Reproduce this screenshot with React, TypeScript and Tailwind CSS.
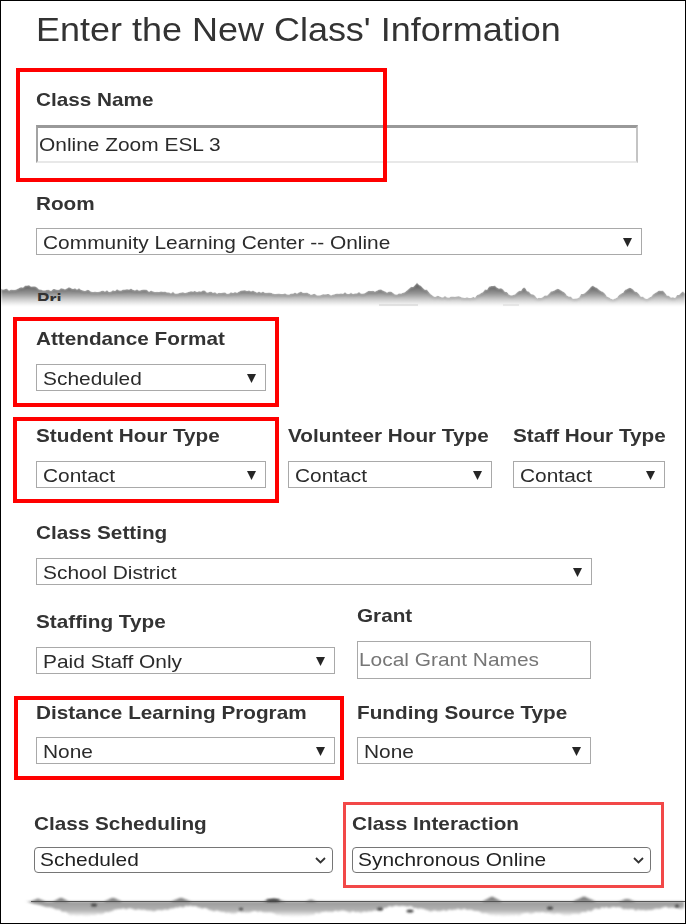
import React from 'react';

const W = 684;

function rng(seed: number) {
  let s = seed;
  return () => {
    s = (s * 16807) % 2147483647;
    return s / 2147483647;
  };
}

// page x, height above base, half width
const topPeaks: [number, number, number][] = [
  [28, 5, 14], [70, 3, 20], [130, 3, 25], [200, 2, 20], [250, 3, 25], [300, 2, 15],
  [345, 2, 20], [378, 6, 28], [416, 13, 18], [493, 13, 20], [523, 10, 14], [556, 10, 16],
  [593, 14, 18], [629, 13, 16], [659, 11, 14], [682, 9, 12],
];

function topRidge() {
  const r = rng(11);
  const pts: [number, number][] = [];
  for (let x = 0; x <= W; x += 2) {
    let y = 14 + (11 * x) / W;
    for (const [px, h, w] of topPeaks) {
      const d = Math.abs(x - px);
      if (d < w) y -= h * (1 - d / w);
    }
    y += (r() - 0.5) * 2.2;
    pts.push([x, y]);
  }
  return pts;
}

const RIDGE = topRidge();
const TOP_FILL = `M0 36 L${RIDGE.map(([x, y]) => `${x} ${y.toFixed(1)}`).join(' L')} L${W} 36 Z`;
const TOP_PAPER = `M0 0 L${RIDGE.map(([x, y]) => `${x} ${(y - 0.5).toFixed(1)}`).join(' L')} L${W} 0 Z`;

const bottomBumps: [number, number, number][] = [
  [37, 3, 8], [60, 4, 8], [112, 4, 9], [180, 4, 10], [273, 3, 12], [310, 2, 6],
  [491, 5, 10], [583, 5, 12], [626, 3, 8],
];

function bottomTearPath() {
  const r = rng(5);
  const top: string[] = [];
  const bottom: string[] = [];
  for (let x = 25; x <= W; x += 2) {
    let y = 11.5;
    for (const [px, h, w] of bottomBumps) {
      const d = Math.abs(x - px);
      if (d < w) y -= h * (1 - d / w);
    }
    top.push(`${x} ${y.toFixed(1)}`);
    const fade = Math.min(1, (x - 25) / 45);
    const depth = 10 + 3.5 * Math.sin(x / 37) + 2 * Math.sin(x / 11) + (r() - 0.5) * 2;
    bottom.unshift(`${x} ${(11.5 + depth * fade).toFixed(1)}`);
  }
  return `M${top.join(' L')} L${bottom.join(' L')} Z`;
}

const BOTTOM_PATH = bottomTearPath();

function TopTear() {
  return (
    <svg width={W} height="36" viewBox={`0 0 ${W} 36`} className="-ml-[35px] mt-[21px] block">
      <defs>
        <linearGradient id="tg" x1="0" y1="8" x2="0" y2="30" gradientUnits="userSpaceOnUse">
          <stop offset="0" stopColor="#5e5e5e" />
          <stop offset="0.4" stopColor="#8f8f8f" />
          <stop offset="0.75" stopColor="#d6d6d6" />
          <stop offset="1" stopColor="#ffffff" />
        </linearGradient>
        <filter id="tb" x="-5%" y="-50%" width="110%" height="200%">
          <feGaussianBlur stdDeviation="0.8" />
        </filter>
        <filter id="ts" x="-5%" y="-50%" width="110%" height="250%">
          <feDropShadow dx="0" dy="1.5" stdDeviation="1.5" floodColor="#000" floodOpacity="0.25" />
        </filter>
        <clipPath id="tc">
          <rect x="0" y="17" width="120" height="8" />
        </clipPath>
      </defs>
      <path d={TOP_FILL} fill="url(#tg)" filter="url(#tb)" />
      <line x1="378" y1="29" x2="417" y2="29" stroke="#dadada" strokeWidth="1.5" />
      <line x1="502" y1="29" x2="518" y2="29" stroke="#e0e0e0" strokeWidth="1.5" />
      <g clipPath="url(#tc)">
        <text x="36" y="30" fontFamily="'Liberation Sans', Arial, sans-serif" fontWeight="bold" fontSize="18.5" fill="#333">
          Pri
        </text>
      </g>
      <path d={TOP_PAPER} fill="#ffffff" filter="url(#ts)" />
    </svg>
  );
}

function BottomTear() {
  return (
    <svg width={W} height="32" viewBox={`0 0 ${W} 32`} className="-ml-[35px] mt-[17px] block">
      <defs>
        <linearGradient id="bg" x1="0" y1="8" x2="0" y2="27" gradientUnits="userSpaceOnUse">
          <stop offset="0" stopColor="#7a7a7a" />
          <stop offset="0.3" stopColor="#a0a0a0" />
          <stop offset="0.65" stopColor="#b4b4b4" />
          <stop offset="1" stopColor="#ffffff" />
        </linearGradient>
        <filter id="bb" x="-5%" y="-50%" width="110%" height="200%">
          <feGaussianBlur stdDeviation="0.9" />
        </filter>
      </defs>
      <path d={BOTTOM_PATH} fill="url(#bg)" filter="url(#bb)" />
      <line x1="30" y1="11.5" x2={W} y2="11.5" stroke="#555" strokeWidth="1" />
      <g fill="#3f3f3f" filter="url(#bb)">
        <ellipse cx="93" cy="15" rx="3" ry="1.5" />
        <ellipse cx="240" cy="19" rx="2" ry="1.2" />
        <ellipse cx="272" cy="10.5" rx="7" ry="1.6" />
        <ellipse cx="379" cy="19" rx="3" ry="1.6" />
        <ellipse cx="409" cy="21" rx="3.5" ry="1.6" />
        <ellipse cx="549" cy="18" rx="3" ry="1.6" />
        <ellipse cx="676" cy="16" rx="2" ry="1.5" />
      </g>
    </svg>
  );
}

function Label({ children, className = '' }: { children: React.ReactNode; className?: string }) {
  return (
    <div className={`h-[22px] whitespace-nowrap text-[18.5px] font-bold leading-[22px] text-[#333] ${className}`}>
      <span className="inline-block origin-left scale-x-[1.12]">{children}</span>
    </div>
  );
}

function Value({ children, className = '' }: { children: React.ReactNode; className?: string }) {
  return (
    <span className={`inline-block origin-left scale-x-[1.1] whitespace-nowrap text-[19px] leading-[22px] ${className}`}>
      {children}
    </span>
  );
}

function Arrow() {
  return (
    <svg width="9" height="9" viewBox="0 0 9 9" className="shrink-0">
      <path d="M0 0H9L4.5 9Z" fill="#262626" />
    </svg>
  );
}

function OldSelect({ value, className = '' }: { value: string; className?: string }) {
  return (
    <div
      className={`flex h-[27px] items-center justify-between border border-[#a9a9a9] bg-white pl-[6px] pr-[9px] pt-[2px] text-[#2b2b2b] ${className}`}
    >
      <Value>{value}</Value>
      <Arrow />
    </div>
  );
}

function NewSelect({ value, className = '' }: { value: string; className?: string }) {
  return (
    <div
      className={`flex h-[26px] items-center justify-between rounded-[4px] border border-[#767676] bg-white pl-[5px] pr-[6px] text-[#222] ${className}`}
    >
      <Value>{value}</Value>
      <svg width="11" height="7" viewBox="0 0 11 7" className="shrink-0">
        <path d="M1 1L5.5 5.5L10 1" fill="none" stroke="#333" strokeWidth="1.8" />
      </svg>
    </div>
  );
}

export default function App() {
  return (
    <div className="relative h-[924px] w-[686px] overflow-hidden border border-black bg-white font-['Liberation_Sans',Arial,sans-serif]">
      <div className="flex flex-col pl-[35px]">
        <h1 className="mt-[9px] h-[40px] whitespace-nowrap text-[33px] font-normal leading-[40px] text-[#333]">
          <span className="inline-block origin-left scale-x-[1.09]">Enter the New Class' Information</span>
        </h1>

        <Label className="mt-[39px]">Class Name</Label>
        <div className="mt-[14px] flex h-[38px] w-[602px] items-center border-b-2 border-l-2 border-r-2 border-t-[3px] border-b-[#e8e8e8] border-l-[#a3a3a3] border-r-[#c4c4c4] border-t-[#999] pl-[1px] text-[#2b2b2b]">
          <Value>Online Zoom ESL 3</Value>
        </div>

        <Label className="mt-[30px]">Room</Label>
        <OldSelect value="Community Learning Center -- Online" className="mt-[13px] w-[606px]" />

        <TopTear />

        <Label className="mt-[16px]">Attendance Format</Label>
        <OldSelect value="Scheduled" className="mt-[14px] w-[230px]" />

        <div className="mt-[34px] flex">
          <div className="w-[230px]">
            <Label>Student Hour Type</Label>
            <OldSelect value="Contact" className="mt-[14px]" />
          </div>
          <div className="ml-[22px] w-[204px]">
            <Label>Volunteer Hour Type</Label>
            <OldSelect value="Contact" className="mt-[14px]" />
          </div>
          <div className="ml-[21px] w-[152px]">
            <Label>Staff Hour Type</Label>
            <OldSelect value="Contact" className="mt-[14px]" />
          </div>
        </div>

        <Label className="mt-[34px]">Class Setting</Label>
        <OldSelect value="School District" className="mt-[14px] w-[556px]" />

        <div className="mt-[20px] flex items-start">
          <div className="mt-[6px] w-[299px]">
            <Label>Staffing Type</Label>
            <OldSelect value="Paid Staff Only" className="mt-[14px]" />
          </div>
          <div className="ml-[22px] w-[234px]">
            <Label>Grant</Label>
            <div className="mt-[14px] flex h-[38px] items-center border border-[#a9a9a9] pl-[1px] text-[#767676]">
              <Value>Local Grant Names</Value>
            </div>
          </div>
        </div>

        <div className="mt-[23px] flex">
          <div className="w-[299px]">
            <Label>Distance Learning Program</Label>
            <OldSelect value="None" className="mt-[13px]" />
          </div>
          <div className="ml-[22px] w-[234px]">
            <Label>Funding Source Type</Label>
            <OldSelect value="None" className="mt-[13px]" />
          </div>
        </div>

        <div className="-ml-[2px] mt-[49px] flex">
          <div className="w-[299px]">
            <Label>Class Scheduling</Label>
            <NewSelect value="Scheduled" className="mt-[12px]" />
          </div>
          <div className="ml-[19px] w-[299px]">
            <Label>Class Interaction</Label>
            <NewSelect value="Synchronous Online" className="mt-[12px]" />
          </div>
        </div>

        <BottomTear />
      </div>

      {/* red annotation boxes drawn over the form */}
      <div className="pointer-events-none absolute left-[15px] top-[67px] h-[114px] w-[371px] border-4 border-[#ff0000]" />
      <div className="pointer-events-none absolute left-[12px] top-[316px] h-[90px] w-[266px] border-4 border-[#ff0000]" />
      <div className="pointer-events-none absolute left-[12px] top-[416px] h-[86px] w-[266px] border-4 border-[#ff0000]" />
      <div className="pointer-events-none absolute left-[13px] top-[695px] h-[84px] w-[330px] border-4 border-[#ff0000]" />
      <div className="pointer-events-none absolute left-[342px] top-[801px] h-[86px] w-[321px] border-[3px] border-[#f24848]" />
    </div>
  );
}
